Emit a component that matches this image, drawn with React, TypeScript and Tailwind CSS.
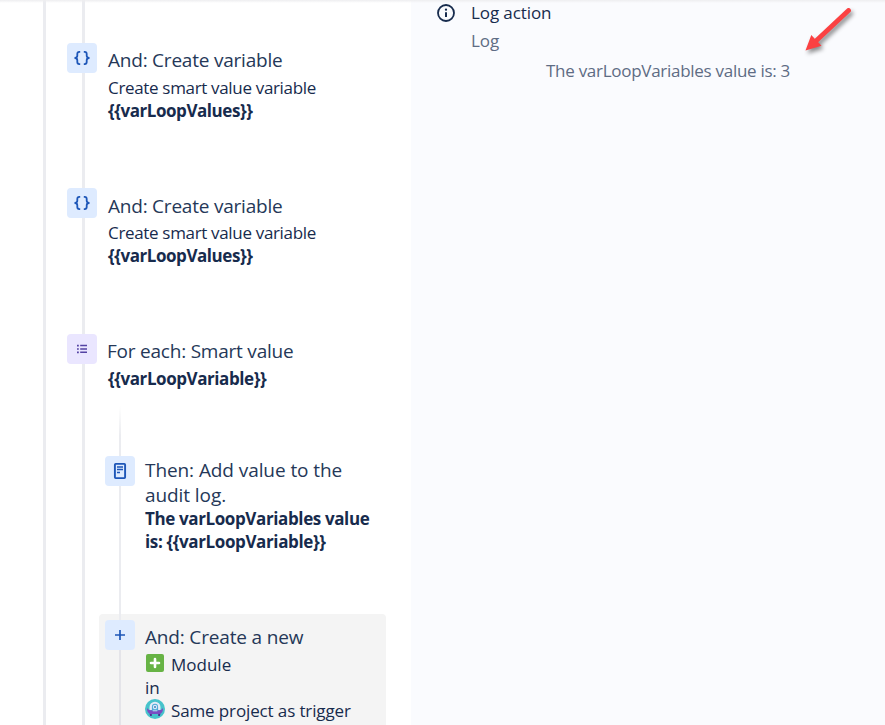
import type { ReactNode } from "react";

function Braces() {
  return (
    <svg width="30" height="30" viewBox="0 0 30 30" fill="none" stroke="#1d56b8" strokeWidth="1.8">
      <path d="M13.200 8.900h-.9q-2 0-2 2v1.900q0 2.200-2.800 2.200 2.800 0 2.800 2.200v1.900q0 2 2 2h.9" />
      <path d="M16.800 8.900h.9q2 0 2 2v1.900q0 2.200 2.800 2.200-2.800 0-2.800 2.200v1.900q0 2-2 2h-.9" />
    </svg>
  );
}

function ListIcon() {
  return (
    <svg width="30" height="30" viewBox="0 0 30 30" fill="#5443a4">
      <path d="M10 10.800h1.800v1.700H10zM10 14.200h1.800v1.600H10zM10 17.500h1.800v1.700H10z" />
      <path d="M13.200 10.800H20v1.500h-6.800zM13.200 14.200H20v1.600h-6.800zM13.200 17.500H20v1.600h-6.800z" />
    </svg>
  );
}

function LogIcon() {
  return (
    <svg width="30" height="30" viewBox="0 0 30 30" fill="none" stroke="#1d56b8">
      <rect x="9.900" y="7.900" width="10.200" height="14.200" rx="0.800" strokeWidth="1.900" />
      <path d="M12 11h6M12 13.500h6M12 16.500h3" strokeWidth="1.500" />
    </svg>
  );
}

function PlusIcon() {
  return (
    <svg width="30" height="30" viewBox="0 0 30 30" stroke="#1d56b8" strokeWidth="1.7">
      <path d="M15 10v10M10 15h10" />
    </svg>
  );
}

function ModuleIcon() {
  return (
    <svg className="relative -top-[2px]" width="18" height="18" viewBox="0 0 18 18">
      <rect width="18" height="18" rx="2" fill="#67b345" />
      <path d="M9 5v8M5 9h8" stroke="#fff" strokeWidth="2.600" strokeLinecap="round" />
    </svg>
  );
}

function ProjectAvatar() {
  return (
    <svg className="relative -top-[2px]" width="20" height="20" viewBox="0 0 20 20">
      <circle cx="10" cy="10" r="10" fill="#46c3cb" />
      <path d="M4.500 14.500h2.300v2.500H5.200zM13.200 14.500h2.300l-.7 2.500h-1.600z" fill="#4b2e91" />
      <path d="M4.500 11V8.200a5.500 5.500 0 0 1 11 0V11z" fill="#e4eaf7" />
      <path d="M2 8.900q1.200 1.800 3.300 2.400h9.400q2.100-.6 3.300-2.400.4 4.900-3.600 6.200H5.600Q1.600 13.800 2 8.900z" fill="#7a4cc2" />
      <path d="M6.900 11.800V7.900a3.100 3.100 0 0 1 6.200 0v3.900z" fill="#4fa9d8" />
      <circle cx="10" cy="8" r="2.200" fill="#d7eef9" />
      <circle cx="10" cy="8" r="1" fill="#4d78bd" />
      <path d="M7.800 10.900h4.400v1.500H7.800z" fill="#9fc4e8" />
    </svg>
  );
}

function InfoIcon() {
  return (
    <svg width="20" height="20" viewBox="0 0 20 20" fill="none">
      <circle cx="10" cy="10" r="8" stroke="#172b4d" strokeWidth="1.800" />
      <circle cx="10" cy="6.700" r="1.150" fill="#172b4d" />
      <path d="M10 9.300v4.700" stroke="#172b4d" strokeWidth="2" />
    </svg>
  );
}

function Arrow() {
  return (
    <svg
      className="absolute left-[394px] top-0 overflow-visible drop-shadow-[2px_3px_2px_rgba(0,0,0,0.45)]"
      width="50"
      height="60"
      viewBox="0 0 50 60"
    >
      <path d="M43.500 10.500 12 40" stroke="#fb4142" strokeWidth="4.800" strokeLinecap="round" />
      <path d="M.5 50.500 6.300 35 9.500 38.500l4 4 3 3.300z" fill="#fb4142" />
    </svg>
  );
}

interface StepProps {
  icon: ReactNode;
  title: ReactNode;
  children: ReactNode;
  tone?: string;
  offset?: string;
}

function Step({ icon, title, children, tone = "bg-[#deebff]", offset = "pt-[5px]" }: StepProps) {
  return (
    <div className="relative flex">
      <div className={`h-[30px] w-[30px] shrink-0 rounded ${tone}`}>{icon}</div>
      <div className={`pl-[10px] whitespace-nowrap ${offset}`}>
        <h3 className="text-[19px] leading-[25px] text-[#253858]">{title}</h3>
        <div className="text-[17px] leading-[23px]">{children}</div>
      </div>
    </div>
  );
}

export default function App() {
  return (
    <div className="relative flex h-[725px] w-[885px] overflow-hidden bg-white font-['Open_Sans',sans-serif] text-[#172b4d]">
      <div className="absolute inset-x-0 top-0 z-10 h-[3px] bg-linear-to-b from-[#eeeef0] to-transparent" />

      {/* rule flow */}
      <div className="relative w-[411px] shrink-0">
        <div className="absolute inset-y-0 left-[43px] w-[3px] bg-[#ebecf0]" />
        <div className="absolute inset-y-0 left-[82px] w-[3px] bg-[#ebecf0]" />

        <div className="pt-[43px] pl-[67px]">
          <div className="h-[145px]">
            <Step icon={<Braces />} title={<span className="pl-px tracking-[-0.22px]">And: Create variable</span>}>
              <p className="pt-[3px] pl-px tracking-[-0.33px]">Create smart value variable</p>
              <p className="pl-px font-bold tracking-[-0.45px]">{"{{varLoopValues}}"}</p>
            </Step>
          </div>
          <div className="h-[146px]">
            <Step
              icon={<Braces />}
              title={<span className="pl-px tracking-[-0.22px]">And: Create variable</span>}
              offset="pt-[6px]"
            >
              <p className="pt-[2px] pl-px tracking-[-0.33px]">Create smart value variable</p>
              <p className="pl-px font-bold tracking-[-0.45px]">{"{{varLoopValues}}"}</p>
            </Step>
          </div>
          <Step
            icon={<ListIcon />}
            title={<span className="tracking-[-0.22px]">For each: Smart value</span>}
            tone="bg-[#eae6ff]"
          >
            <p className="pt-[3px] pl-px font-bold tracking-[-0.43px]">{"{{varLoopVariable}}"}</p>
          </Step>
        </div>

        {/* loop body */}
        <div className="relative mt-[14px] ml-[99px] w-[287px] pt-[52px]">
          <div className="h-[158px] pl-[6px]">
            <Step
              icon={<LogIcon />}
              title={
                <>
                  <span className="tracking-[-0.08px]">Then: Add value to the</span>
                  <br />
                  <span className="tracking-[-0.08px]">audit log.</span>
                </>
              }
              offset="pt-[2px]"
            >
              <p className="-mt-px font-bold tracking-[-0.38px]">The varLoopVariables value</p>
              <p className="font-bold tracking-[-0.38px]">is: {"{{varLoopVariable}}"}</p>
            </Step>
          </div>
          <div className="h-[120px] rounded bg-[#f4f4f4] pt-[6px] pl-[6px]">
            <Step icon={<PlusIcon />} title={<span className="tracking-[-0.17px]">And: Create a new</span>}>
              <p className="flex items-center gap-[7px] pt-[3px] pl-px">
                <ModuleIcon />
                <span>Module</span>
              </p>
              <p>in</p>
              <p className="flex items-center gap-[6px]">
                <ProjectAvatar />
                <span className="tracking-[-0.13px]">Same project as trigger</span>
              </p>
            </Step>
          </div>
          <div className="absolute top-[2px] left-[20px] h-[50px] w-[2px] bg-linear-to-b from-transparent to-[#ebecf0] to-60%" />
          <div className="absolute top-[82px] left-[20px] h-[134px] w-[2px] bg-[#ebecf0]" />
          <div className="absolute top-[246px] left-[20px] h-[90px] w-[2px] bg-[#e4e4e9]" />
        </div>
      </div>

      {/* audit log details */}
      <div className="relative flex-1 bg-[#fafbfe] pt-[3px]">
        <div className="flex pl-[25px]">
          <InfoIcon />
          <div className="-mt-0.5 pl-[15px] text-[17px] leading-[23px]">
            <p className="tracking-[-0.1px]">Log action</p>
            <p className="pt-[5px] text-[#5e6c84]">Log</p>
          </div>
        </div>
        <p className="pt-[7px] pl-[135px] text-[17px] leading-[23px] tracking-[-0.28px] text-[#5e6c84]">
          The varLoopVariables value is: 3
        </p>
        <Arrow />
      </div>
    </div>
  );
}
